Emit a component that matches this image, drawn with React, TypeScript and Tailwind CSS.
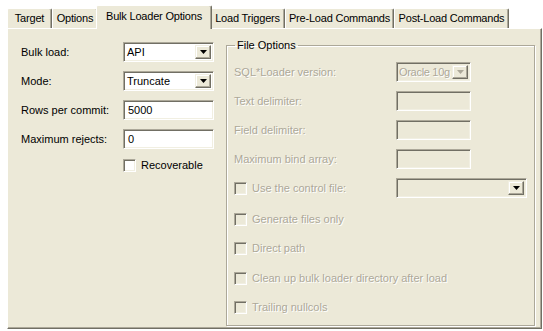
import React from "react";

const font = { fontFamily: '"Liberation Sans", Arial, sans-serif' };

type TabProps = { label: string; width: string; active?: boolean };

function Tab({ label, width, active = false }: TabProps) {
  if (active) {
    return (
      <div
        className={`relative z-10 -mx-[2px] -mb-[1px] flex h-[24px] items-start justify-center rounded-t-[2px] border-l border-t border-r border-l-white border-t-white border-r-[#716F64] bg-[#ECE9D8] pt-[2px] text-[11px] tracking-[-0.2px] text-black shadow-[inset_-1px_0_0_#ACA899] ${width}`}
      >
        {label}
      </div>
    );
  }
  return (
    <div
      className={`flex h-[20px] items-start justify-center rounded-t-[2px] border-l border-t border-r border-l-white border-t-white border-r-[#716F64] bg-[#ECE9D8] pt-[1px] text-[11px] tracking-[-0.2px] text-black shadow-[inset_-1px_0_0_#ACA899] ${width}`}
    >
      {label}
    </div>
  );
}

function Arrow({ disabled = false }: { disabled?: boolean }) {
  return (
    <div className="flex h-full w-[16px] shrink-0 items-center justify-center border border-l-[#F1EFE2] border-t-[#F1EFE2] border-r-[#716F64] border-b-[#716F64] bg-[#ECE9D8] shadow-[inset_-1px_-1px_0_#ACA899,inset_1px_1px_0_white]">
      <svg width="7" height="4" viewBox="0 0 7 4">
        <path d="M0 0h7L3.5 4z" fill={disabled ? "#ACA899" : "#000"} />
      </svg>
    </div>
  );
}

function Sunken({ className = "", children }: { className?: string; children?: React.ReactNode }) {
  return (
    <div
      className={`flex h-[20px] items-center border border-l-[#ACA899] border-t-[#ACA899] border-r-white border-b-white text-[11px] shadow-[inset_1px_1px_0_#716F64,inset_-1px_-1px_0_#F1EFE2] ${className}`}
    >
      {children}
    </div>
  );
}

function Select({ value, width, disabled = false, dimArrow = false }: { value: string; width: string; disabled?: boolean; dimArrow?: boolean }) {
  return (
    <Sunken className={`${width} ${disabled ? "bg-[#ECE9D8]" : "bg-white"} p-[2px]`}>
      <span
        className={`flex-1 overflow-hidden whitespace-nowrap text-[11px] ${disabled ? "tracking-[-0.3px] text-[#ACA899] [text-shadow:1px_1px_0_white]" : "pl-[1px] text-black"}`}
      >
        {value}
      </span>
      <Arrow disabled={dimArrow} />
    </Sunken>
  );
}

function Input({ value, width, disabled = false }: { value?: string; width: string; disabled?: boolean }) {
  return (
    <Sunken className={`${width} ${disabled ? "bg-[#ECE9D8]" : "bg-white"} px-[4px]`}>
      <span className="text-[11px] text-black">{value}</span>
    </Sunken>
  );
}

function Check({ label, disabled = false }: { label: string; disabled?: boolean }) {
  return (
    <div className="flex h-[20px] items-center gap-[5px] text-[11px]">
      <div
        className={`h-[13px] w-[13px] border border-l-[#ACA899] border-t-[#ACA899] border-r-white border-b-white shadow-[inset_1px_1px_0_#716F64,inset_-1px_-1px_0_#F1EFE2] ${disabled ? "bg-[#ECE9D8]" : "bg-white"}`}
      />
      <span
        className={`text-[11px] ${disabled ? "text-[#ACA899] [text-shadow:1px_1px_0_white]" : "text-black"}`}
      >
        {label}
      </span>
    </div>
  );
}

function Label({ children, disabled = false }: { children: React.ReactNode; disabled?: boolean }) {
  return (
    <span
      className={`text-[11px] leading-[14px] ${disabled ? "w-[162px] text-[#ACA899] [text-shadow:1px_1px_0_white]" : "w-[102px] text-black"}`}
    >
      {children}
    </span>
  );
}

export default function App() {
  return (
    <div className="flex h-[331px] w-[543px] flex-col bg-white pt-[5px] text-[11px]" style={font}>
      {/* tab strip */}
      <div className="flex items-end pl-[7px]">
        <Tab label="Target" width="w-[45px]" />
        <Tab label="Options" width="w-[46px]" />
        <Tab label="Bulk Loader Options" width="w-[116px]" active />
        <Tab label="Load Triggers" width="w-[75px]" />
        <Tab label="Pre-Load Commands" width="w-[109px]" />
        <Tab label="Post-Load Commands" width="w-[115px]" />
      </div>

      {/* tab page */}
      <div className="ml-[7px] flex h-[301px] w-[535px] border border-l-white border-t-white border-r-[#716F64] border-b-[#716F64] bg-[#ECE9D8] shadow-[inset_-1px_-1px_0_#ACA899]">
        {/* left column */}
        <div className="flex w-[218px] flex-col gap-[9px] pl-[13px] pt-[13px]">
          <div className="flex items-center">
            <Label>Bulk load:</Label>
            <Select value="API" width="w-[91px]" />
          </div>
          <div className="flex items-center">
            <Label>Mode:</Label>
            <Select value="Truncate" width="w-[91px]" />
          </div>
          <div className="flex items-center">
            <Label>Rows per commit:</Label>
            <Input value="5000" width="w-[91px]" />
          </div>
          <div className="flex items-center">
            <Label>Maximum rejects:</Label>
            <Input value="0" width="w-[91px]" />
          </div>
          <div className="-mt-[3px] pl-[102px]">
            <Check label="Recoverable" />
          </div>
        </div>

        {/* file options group */}
        <fieldset className="mb-[2px] mt-[9px] w-[309px] self-stretch border border-[#ACA899] px-[7px] shadow-[1px_1px_0_white,inset_1px_1px_0_white]">
          <legend className="ml-[1px] px-[2px] text-[11px] leading-[14px] text-black">File Options</legend>
          <div className="mt-[10px] flex flex-col gap-[9px] text-[11px]">
            <div className="flex items-center">
              <Label disabled>SQL*Loader version:</Label>
              <Select value="Oracle 10g" width="w-[75px]" disabled dimArrow />
            </div>
            <div className="flex items-center">
              <Label disabled>Text delimiter:</Label>
              <Input width="w-[75px]" disabled />
            </div>
            <div className="flex items-center">
              <Label disabled>Field delimiter:</Label>
              <Input width="w-[75px]" disabled />
            </div>
            <div className="flex items-center">
              <Label disabled>Maximum bind array:</Label>
              <Input width="w-[75px]" disabled />
            </div>
            <div className="flex items-center">
              <div className="w-[162px]">
                <Check label="Use the control file:" disabled />
              </div>
              <Select value="" width="w-[131px]" disabled />
            </div>
            <div className="flex flex-col gap-[9.5px] pt-[2px]">
              <Check label="Generate files only" disabled />
              <Check label="Direct path" disabled />
              <Check label="Clean up bulk loader directory after load" disabled />
              <Check label="Trailing nullcols" disabled />
            </div>
          </div>
        </fieldset>
      </div>
    </div>
  );
}
